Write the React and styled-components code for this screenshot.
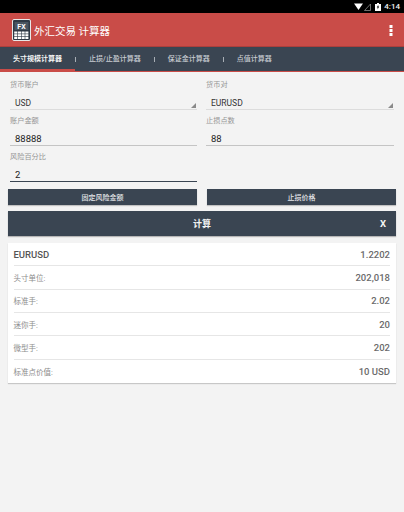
import React from 'react';
import styled, { createGlobalStyle } from 'styled-components';

const GlobalStyle = createGlobalStyle`
	html, body {
		margin: 0;
		padding: 0;
		background: #f3f3f3;
	}
	body {
		font-family: Roboto, "Noto Sans CJK SC", sans-serif;
	}
`

const Page = styled.div`
	width: 404px;
	height: 512px;
	overflow: hidden;
	background: #f3f3f3;
`

const StatusBar = styled.div`
	height: 13px;
	background: #000;
	display: flex;
	align-items: center;
	justify-content: flex-end;
	padding-right: 4px;
	color: #f2f2f2;
`

const Clock = styled.span`
	font-size: 8px;
	font-weight: 500;
	margin-left: 3px;
`

const BatteryIcon = styled.svg`
	margin-left: 4px;
`

const AppBar = styled.div`
	height: 34px;
	box-sizing: border-box;
	background: #c94c48;
	border-bottom: 1px solid #ad3f3c;
	display: flex;
	align-items: center;
	padding: 1px 11px 0 12px;
`

const Title = styled.div`
	color: #fff;
	font-size: 10.5px;
	margin-left: 3px;
	flex-grow: 1;
`

const Tabs = styled.div`
	height: 25px;
	box-sizing: border-box;
	background: #3a4552;
	border-bottom: 1px solid #c94c48;
	display: flex;
	align-items: center;
`

const Tab = styled.div`
	height: 24px;
	box-sizing: border-box;
	padding: 0 13px;
	display: flex;
	align-items: center;
	font-size: 7px;
	font-weight: ${ ({ $active }) => $active ? 700 : 500 };
	color: ${ ({ $active }) => $active ? '#f4f4f4' : '#c9cdd2' };
	border-bottom: 2px solid ${ ({ $active }) => $active ? '#c94c48' : 'transparent' };
`

const TabRule = styled.span`
	width: 1px;
	height: 5px;
	background: #a8aeb5;
	flex-shrink: 0;
`

const Form = styled.div`
	display: grid;
	grid-template-columns: 187px 188px;
	column-gap: 9px;
	padding: 7px 10px 0;
`

const Field = styled.div`
	height: 36px;
`

const Label = styled.div`
	font-size: 7.2px;
	color: #959595;
	height: 11px;
	line-height: 11px;
`

const Value = styled.div`
	height: 20px;
	box-sizing: border-box;
	padding: 5.5px 0 0 5px;
	font-size: ${ ({ $small }) => $small ? '8.5px' : '9.5px' };
	color: ${ ({ $small }) => $small ? '#333' : '#222' };
	line-height: 14px;
	border-bottom: 1px solid ${ ({ $focused, $small }) => $focused ? '#3a4552' : $small ? '#dcdcdc' : '#c4c4c4' };
	position: relative;
`

const Arrow = styled.span`
	position: absolute;
	right: 1px;
	bottom: 1px;
	width: 0;
	height: 0;
	border-style: solid;
	border-width: 0 0 5px 5px;
	border-color: transparent transparent #8a8a8a transparent;
`

const ButtonRow = styled.div`
	display: grid;
	grid-template-columns: 189px 189px;
	column-gap: 10px;
	padding: 2px 8px 0;
`

const SmallButton = styled.div`
	height: 16px;
	background: #3a4552;
	box-shadow: 0 1px 1px rgba(0, 0, 0, 0.2);
	color: #e4e6e9;
	font-size: 7px;
	font-weight: 500;
	display: flex;
	align-items: center;
	justify-content: center;
`

const CalcBar = styled.div`
	height: 25px;
	margin: 6px 8px 0;
	background: #3a4552;
	box-shadow: 0 1px 1px rgba(0, 0, 0, 0.25);
	color: #f4f4f4;
	font-size: 9px;
	font-weight: 700;
	display: flex;
	align-items: center;
	justify-content: center;
	position: relative;
`

const Close = styled.span`
	position: absolute;
	right: 10px;
	font-size: 9.5px;
	font-weight: 700;
`

const Card = styled.div`
	margin: 7px 8px 0;
	background: #fff;
	padding: 0 6px 0 5.5px;
	box-shadow: 0 1px 1px rgba(0, 0, 0, 0.18);
`

const Row = styled.div`
	height: 23.33px;
	box-sizing: border-box;
	display: flex;
	align-items: center;
	justify-content: space-between;
	border-bottom: 1px solid #e6e6e6;
	&:last-child {
		border-bottom: none;
	}
`

const RowName = styled.span`
	font-size: ${ ({ $head }) => $head ? '9.5px' : '7.5px' };
	font-weight: ${ ({ $head }) => $head ? 500 : 400 };
	color: ${ ({ $head }) => $head ? '#555' : '#8c8c8c' };
`

const RowValue = styled.span`
	font-size: 9.5px;
	font-weight: 500;
	color: #6b6b6b;
`

const Logo = () => (
	<svg width="19" height="22" viewBox="0 0 19 22">
		<rect x="0.5" y="0.5" width="18" height="21" rx="1.5" fill="#2f3945" stroke="#e8e8e8" strokeWidth="1" />
		<rect x="2.5" y="3" width="14" height="8" fill="#4a5561" />
		<text x="9.5" y="9.8" fontSize="7" fontWeight="700" fill="#fff" textAnchor="middle" fontFamily="Roboto">FX</text>
		<g fill="#fff">
			{[12.5, 15.2, 17.9].map(y => [2.2, 5.9, 9.6, 13.3].map(x => (
				<rect key={`${x}-${y}`} x={x} y={y} width="3.1" height="2.1" />
			)))}
		</g>
	</svg>
);

const Signal = () => (
	<svg width="17" height="8" viewBox="0 0 17 8">
		<path d="M0 .5h9L4.5 7z" fill="#fff" />
		<path d="M10.5 7.5L16.5 1v6.5z" fill="none" stroke="#8a8a8a" strokeWidth="0.8" />
	</svg>
);

const Battery = () => (
	<BatteryIcon width="6" height="8" viewBox="0 0 6 8">
		<path d="M2 0h2v1h2v7H0V1h2z" fill="#fff" />
		<path d="M3.3 1.8L1.8 4.4h1l-.3 2 1.7-3h-1z" fill="#000" />
	</BatteryIcon>
);

const Menu = () => (
	<svg width="4" height="11" viewBox="0 0 4 11">
		<rect x="0.5" y="0" width="3" height="3" fill="#fff" />
		<rect x="0.5" y="4" width="3" height="3" fill="#fff" />
		<rect x="0.5" y="8" width="3" height="3" fill="#fff" />
	</svg>
);

const results = [
	['头寸单位:', '202,018'],
	['标准手:', '2.02'],
	['迷你手:', '20'],
	['微型手:', '202'],
	['标准点价值:', '10 USD'],
];

const tabs = ['头寸规模计算器', '止损/止盈计算器', '保证金计算器', '点值计算器'];

const App = () => (
	<Page>
		<GlobalStyle />
		<StatusBar>
			<Signal />
			<Battery />
			<Clock>4:14</Clock>
		</StatusBar>
		<AppBar>
			<Logo />
			<Title>外汇交易 计算器</Title>
			<Menu />
		</AppBar>
		<Tabs>
			{tabs.map((name, i) => (
				<React.Fragment key={name}>
					<Tab $active={i === 0}>{name}</Tab>
					{i < 3 && <TabRule />}
				</React.Fragment>
			))}
		</Tabs>
		<Form>
			<Field>
				<Label>货币账户</Label>
				<Value $small>USD<Arrow /></Value>
			</Field>
			<Field>
				<Label>货币对</Label>
				<Value $small>EURUSD<Arrow /></Value>
			</Field>
			<Field>
				<Label>账户金额</Label>
				<Value>88888</Value>
			</Field>
			<Field>
				<Label>止损点数</Label>
				<Value>88</Value>
			</Field>
			<Field>
				<Label>风险百分比</Label>
				<Value $focused>2</Value>
			</Field>
		</Form>
		<ButtonRow>
			<SmallButton>固定风险金额</SmallButton>
			<SmallButton>止损价格</SmallButton>
		</ButtonRow>
		<CalcBar>
			计算
			<Close>X</Close>
		</CalcBar>
		<Card>
			<Row>
				<RowName $head>EURUSD</RowName>
				<RowValue>1.2202</RowValue>
			</Row>
			{results.map(([name, value]) => (
				<Row key={name}>
					<RowName>{name}</RowName>
					<RowValue>{value}</RowValue>
				</Row>
			))}
		</Card>
	</Page>
);

export default App;
